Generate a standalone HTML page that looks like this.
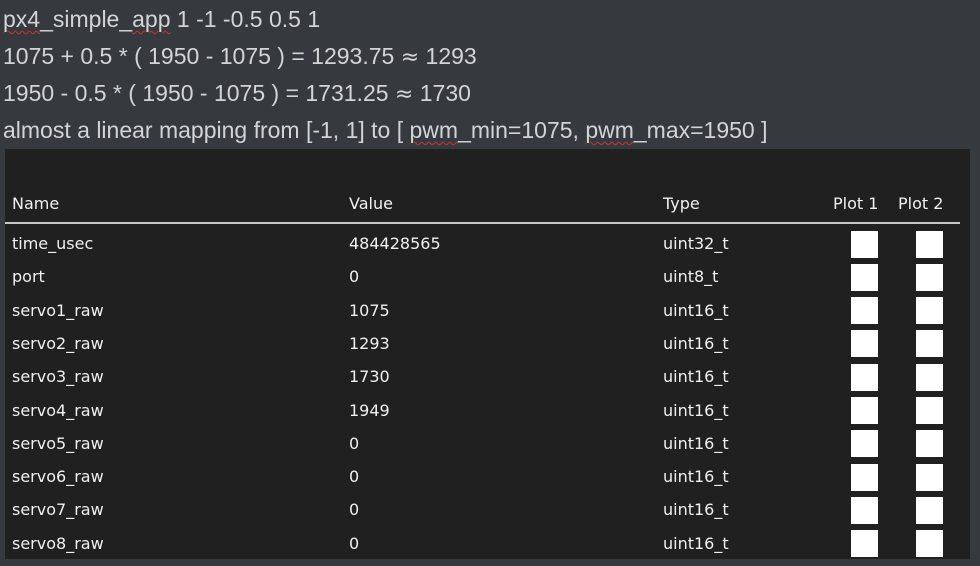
<!DOCTYPE html>
<html><head><style>
body{margin:0;width:980px;height:566px;background:#363a3f;overflow:hidden;position:relative;font-family:"Liberation Sans",sans-serif}
.t{position:absolute;left:3px;color:#d2d4d6;font-size:23px;white-space:nowrap;line-height:26px}
.ap{font-family:"DejaVu Sans",sans-serif;font-size:22px}
.sq{text-decoration:underline wavy #d03030;text-decoration-thickness:1px;text-underline-offset:3px}
#p{position:absolute;left:5px;top:149px;width:965px;height:410px;background:#202020}
.c{position:absolute;color:#f0f0f0;font-family:"DejaVu Sans",sans-serif;font-size:16px;white-space:nowrap;line-height:20px}
.b{position:absolute;width:27px;height:27px;background:#fff}
</style></head><body>
<div class="t" style="top:6px"><span class="sq">px4</span>_simple_<span class="sq">app</span> 1 -1 -0.5 0.5 1</div>
<div class="t" style="top:43px">1075 + 0.5 * ( 1950 - 1075 ) = 1293.75 <span class="ap">≈</span> 1293</div>
<div class="t" style="top:80px">1950 - 0.5 * ( 1950 - 1075 ) = 1731.25 <span class="ap">≈</span> 1730</div>
<div class="t" style="top:117px">almost a linear mapping from [-1, 1] to [ <span class="sq">pwm</span>_min=1075, <span class="sq">pwm</span>_max=1950 ]</div>
<div id="p"></div>
<div style="position:absolute;left:5px;top:222px;width:955px;height:2px;background:#c8c8c8"></div>
<div class="c" style="left:12px;top:194px">Name</div>
<div class="c" style="left:349px;top:194px">Value</div>
<div class="c" style="left:663px;top:194px">Type</div>
<div class="c" style="left:833px;top:194px">Plot 1</div>
<div class="c" style="left:898px;top:194px">Plot 2</div>
<div id="rows"></div>
<script>
var d=[["time_usec","484428565","uint32_t"],["port","0","uint8_t"],["servo1_raw","1075","uint16_t"],["servo2_raw","1293","uint16_t"],["servo3_raw","1730","uint16_t"],["servo4_raw","1949","uint16_t"],["servo5_raw","0","uint16_t"],["servo6_raw","0","uint16_t"],["servo7_raw","0","uint16_t"],["servo8_raw","0","uint16_t"]];
var h="";d.forEach(function(r,i){var y=244+i*33.3;
h+='<div class="c" style="left:12px;top:'+(y-10)+'px">'+r[0]+'</div><div class="c" style="left:349px;top:'+(y-10)+'px">'+r[1]+'</div><div class="c" style="left:663px;top:'+(y-10)+'px">'+r[2]+'</div><div class="b" style="left:851px;top:'+(y-13.5)+'px"></div><div class="b" style="left:916px;top:'+(y-13.5)+'px"></div>';});
document.getElementById("rows").innerHTML=h;
</script>
</body></html>
